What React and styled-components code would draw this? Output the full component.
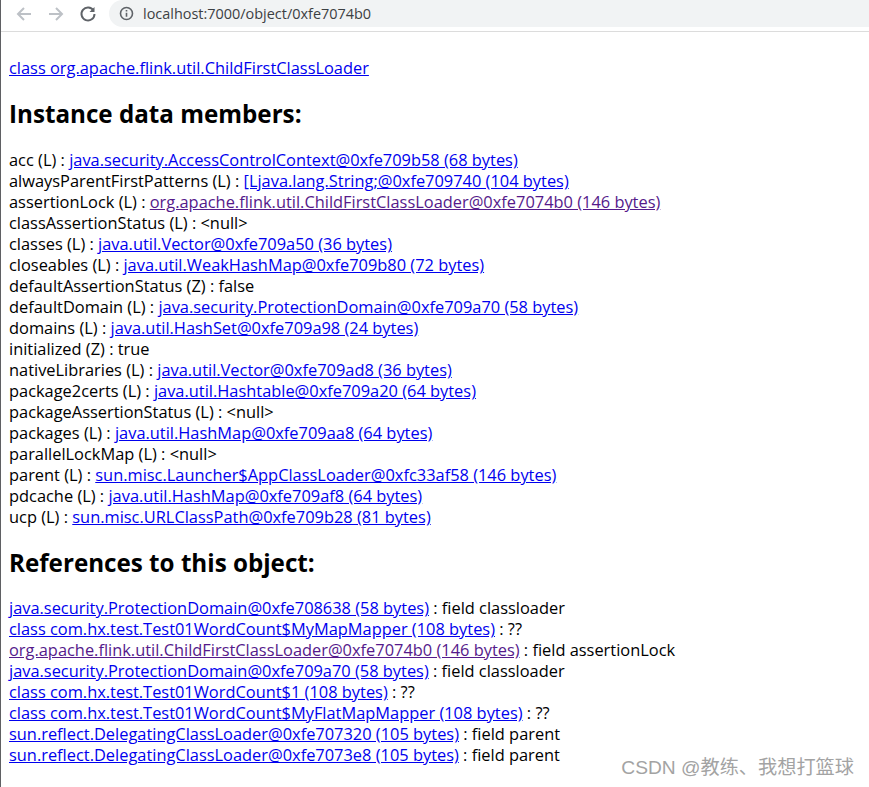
import React from "react";
import styled, { createGlobalStyle } from "styled-components";

const members = [
  ["acc (L)", "java.security.AccessControlContext@0xfe709b58 (68 bytes)"],
  ["alwaysParentFirstPatterns (L)", "[Ljava.lang.String;@0xfe709740 (104 bytes)"],
  ["assertionLock (L)", "org.apache.flink.util.ChildFirstClassLoader@0xfe7074b0 (146 bytes)", true],
  ["classAssertionStatus (L)", null, false, "<null>"],
  ["classes (L)", "java.util.Vector@0xfe709a50 (36 bytes)"],
  ["closeables (L)", "java.util.WeakHashMap@0xfe709b80 (72 bytes)"],
  ["defaultAssertionStatus (Z)", null, false, "false"],
  ["defaultDomain (L)", "java.security.ProtectionDomain@0xfe709a70 (58 bytes)"],
  ["domains (L)", "java.util.HashSet@0xfe709a98 (24 bytes)"],
  ["initialized (Z)", null, false, "true"],
  ["nativeLibraries (L)", "java.util.Vector@0xfe709ad8 (36 bytes)"],
  ["package2certs (L)", "java.util.Hashtable@0xfe709a20 (64 bytes)"],
  ["packageAssertionStatus (L)", null, false, "<null>"],
  ["packages (L)", "java.util.HashMap@0xfe709aa8 (64 bytes)"],
  ["parallelLockMap (L)", null, false, "<null>"],
  ["parent (L)", "sun.misc.Launcher$AppClassLoader@0xfc33af58 (146 bytes)"],
  ["pdcache (L)", "java.util.HashMap@0xfe709af8 (64 bytes)"],
  ["ucp (L)", "sun.misc.URLClassPath@0xfe709b28 (81 bytes)"],
];

const references = [
  ["java.security.ProtectionDomain@0xfe708638 (58 bytes)", "field classloader"],
  ["class com.hx.test.Test01WordCount$MyMapMapper (108 bytes)", "??"],
  ["org.apache.flink.util.ChildFirstClassLoader@0xfe7074b0 (146 bytes)", "field assertionLock", true],
  ["java.security.ProtectionDomain@0xfe709a70 (58 bytes)", "field classloader"],
  ["class com.hx.test.Test01WordCount$1 (108 bytes)", "??"],
  ["class com.hx.test.Test01WordCount$MyFlatMapMapper (108 bytes)", "??"],
  ["sun.reflect.DelegatingClassLoader@0xfe707320 (105 bytes)", "field parent"],
  ["sun.reflect.DelegatingClassLoader@0xfe7073e8 (105 bytes)", "field parent"],
];

const GlobalStyle = createGlobalStyle`
  html, body {
    margin: 0;
    background: #fff;
  }
  body {
    font-family: "Open Sans", "Noto Sans", sans-serif;
    font-size: 16.4px;
    color: #000;
  }
`;

const Page = styled.div`
  position: relative;
  height: 787px;
  overflow: hidden;
  border-left: 1px solid #5f6063;
  box-sizing: border-box;
`;

const Toolbar = styled.div`
  display: flex;
  align-items: center;
  height: 32px;
  box-sizing: border-box;
  padding-left: 14px;
  border-bottom: 1px solid #dcdcdc;
`;

const NavIcon = styled.svg`
  width: 18px;
  height: 18px;
  margin-right: 14px;
  margin-top: -4px;
  fill: none;
  stroke: ${(p) => (p.$active ? "#5f6368" : "#bdc1c6")};
  stroke-width: 2;
`;

const AddressBar = styled.div`
  flex: 1;
  display: flex;
  align-items: center;
  gap: 9px;
  height: 27px;
  margin: -4px 0 0 -2px;
  padding-left: 10px;
  background: #f1f3f4;
  border-radius: 14px 0 0 14px;
  font-size: 14.45px;
  color: #3c4043;
`;

const InfoIcon = styled.svg`
  width: 15px;
  height: 15px;
  fill: none;
  stroke: #5f6368;
  stroke-width: 1.6;
`;

const Content = styled.main`
  padding: 25px 0 0 8px;
  line-height: 21px;
`;

const Heading = styled.h1`
  margin: 20px 0 ${(p) => p.$below}px;
  font-size: 24.2px;
  line-height: 32px;
  font-weight: 700;
`;

const Row = styled.div`
  white-space: nowrap;
`;

const ObjectLink = styled.a`
  color: ${(p) => (p.$visited ? "#551a8b" : "#0000ee")};
  text-decoration: underline;
`;

const Watermark = styled.div`
  position: absolute;
  right: 15px;
  bottom: 7px;
  font-family: "Liberation Sans", "Noto Sans CJK SC", sans-serif;
  font-size: 19.2px;
  line-height: 24px;
  color: #a3a3a3;
`;

export default function App() {
  return (
    <Page>
      <GlobalStyle />
      <Toolbar>
        <NavIcon viewBox="0 0 18 18">
          <path d="M16 9H3M9 3L3 9l6 6" />
        </NavIcon>
        <NavIcon viewBox="0 0 18 18">
          <path d="M2 9h13M9 3l6 6-6 6" />
        </NavIcon>
        <NavIcon viewBox="0 0 18 18" $active>
          <path d="M14.5 5.5A6.5 6.5 0 1 0 15.5 9" />
          <path d="M15.5 2v5h-5" fill="#5f6368" stroke="none" />
        </NavIcon>
        <AddressBar>
          <InfoIcon viewBox="0 0 15 15">
            <circle cx="7.5" cy="7.5" r="6" />
            <path d="M7.5 6.8v4M7.5 4v1.6" />
          </InfoIcon>
          localhost:7000/object/0xfe7074b0
        </AddressBar>
      </Toolbar>
      <Content>
        <Row>
          <ObjectLink href="#">class org.apache.flink.util.ChildFirstClassLoader</ObjectLink>
        </Row>
        <Heading $below={19}>Instance data members:</Heading>
        {members.map(([name, link, visited, value]) => (
          <Row key={name}>
            {name} :{" "}
            {link ? <ObjectLink href="#" $visited={visited}>{link}</ObjectLink> : value}
          </Row>
        ))}
        <Heading $below={18}>References to this object:</Heading>
        {references.map(([link, note, visited]) => (
          <Row key={link}>
            <ObjectLink href="#" $visited={visited}>{link}</ObjectLink> : {note}
          </Row>
        ))}
      </Content>
      <Watermark>CSDN @教练、我想打篮球</Watermark>
    </Page>
  );
}
